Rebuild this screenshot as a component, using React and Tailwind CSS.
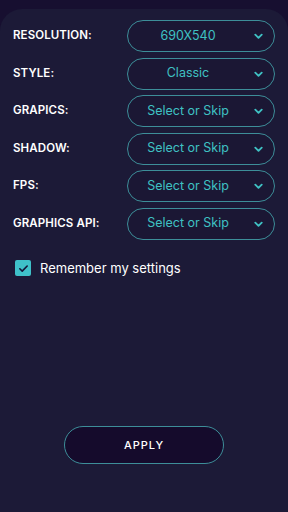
import React, { useState } from "react";

const ROWS = [
  { label: "RESOLUTION:", value: "690X540" },
  { label: "STYLE:", value: "Classic" },
  { label: "GRAPICS:", value: "Select or Skip" },
  { label: "SHADOW:", value: "Select or Skip" },
  { label: "FPS:", value: "Select or Skip" },
  { label: "GRAPHICS API:", value: "Select or Skip" },
];

const Chevron = () => (
  <svg viewBox="0 0 12 12" className="w-[11px] h-[11px]" fill="none">
    <path
      d="M2.5 4.5L6 8l3.5-3.5"
      stroke="#3fc1c3"
      strokeWidth={2}
      strokeLinecap="round"
      strokeLinejoin="round"
    />
  </svg>
);

const SettingRow = ({ label, value }) => (
  <div className="flex items-center justify-between h-[32px]">
    <span className="text-[11.5px] font-semibold text-white tracking-[0.1px]">{label}</span>
    <button className="relative w-[148px] h-[32px] rounded-full border border-[#3d8e99] bg-[#1b1734] flex items-center justify-center">
      <span className="text-[12.5px] text-[#3fc1c3] pr-[26px]">{value}</span>
      <span className="absolute right-[10px] top-1/2 -translate-y-1/2 flex">
        <Chevron />
      </span>
    </button>
  </div>
);

export default function App() {
  const [remember, setRemember] = useState(true);

  return (
    <div className="w-[288px] h-[512px] bg-[#170f30] pt-[9px] font-['Inter',sans-serif]">
      <div className="h-full rounded-t-[22px] bg-[#1c1a37] px-[13px] pt-[11px] flex flex-col">
        <div className="flex flex-col gap-[5.5px]">
          {ROWS.map((row) => (
            <SettingRow key={row.label} label={row.label} value={row.value} />
          ))}
        </div>

        <label className="mt-[19px] ml-[2px] flex items-center gap-[9px] cursor-pointer">
          <span
            onClick={() => setRemember(!remember)}
            className="w-[16px] h-[16px] rounded-[2px] bg-[#3fc1c9] flex items-center justify-center"
          >
            {remember && (
              <svg viewBox="0 0 12 12" className="w-[11px] h-[11px]" fill="none">
                <path
                  d="M2 6.3l2.6 2.5L10 3.3"
                  stroke="#14163a"
                  strokeWidth={1.8}
                  strokeLinecap="round"
                  strokeLinejoin="round"
                />
              </svg>
            )}
          </span>
          <span className="text-[13px] text-white">Remember my settings</span>
        </label>

        <div className="mt-auto mb-[48px] flex justify-center">
          <button className="w-[160px] h-[38px] rounded-full border border-[#3d8e99] bg-[#150b2c] text-white text-[11px] font-medium tracking-[1px]">
            APPLY
          </button>
        </div>
      </div>
    </div>
  );
}
